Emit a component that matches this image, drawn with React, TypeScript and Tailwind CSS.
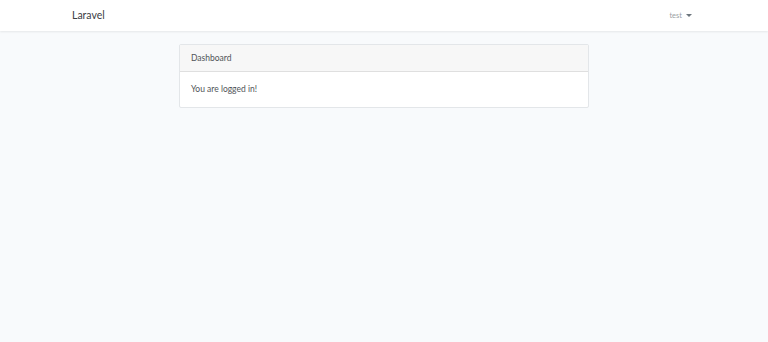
import React from "react";

export default function App() {
  return (
    <div className="min-h-[342px] bg-[#f8fafc] text-[#212529]" style={{ fontFamily: "Lato, 'Open Sans', sans-serif" }}>
      <nav className="h-[31px] bg-white shadow-[0_1px_2px_rgba(0,0,0,0.08)] flex items-center">
        <div className="w-full flex items-center justify-between pl-[72px] pr-[76px]">
          <span className="text-[10.5px] text-[#3c4044] leading-none">Laravel</span>
          <span className="flex items-center gap-[4px] text-[7.5px] text-[#9a9fa4] leading-none">
            test
            <span className="w-0 h-0 border-l-[3px] border-r-[3px] border-t-[3px] border-l-transparent border-r-transparent border-t-[#6c757d]"></span>
          </span>
        </div>
      </nav>
      <main className="flex justify-center pt-[13px]">
        <div className="w-[410px] bg-white border border-[#e3e6e9] rounded-[2px]">
          <div className="h-[27px] bg-[#f7f7f7] border-b border-[#dfdfdf] flex items-center px-[11px] text-[8.5px] text-[#505458]">
            Dashboard
          </div>
          <div className="h-[35px] flex items-center px-[11px] text-[8.5px] text-[#505458]">
            You are logged in!
          </div>
        </div>
      </main>
    </div>
  );
}
